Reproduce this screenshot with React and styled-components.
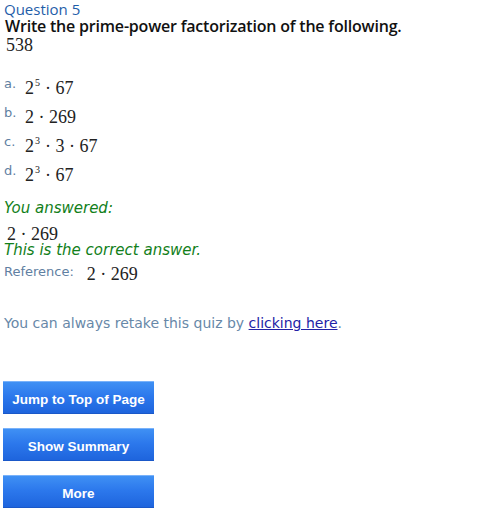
import React from "react";
import styled, { createGlobalStyle } from "styled-components";

const Global = createGlobalStyle`
  html, body { margin: 0; padding: 0; background: #fff; }
  body { font-family: "DejaVu Sans", sans-serif; }
`;

const Page = styled.div`
  width: 504px;
  height: 512px;
  overflow: hidden;
  padding: 0 4px;
  box-sizing: border-box;
  display: flex;
  flex-direction: column;
`;

const QTitle = styled.div`
  font-family: "Open Sans", sans-serif;
  font-size: 15px;
  line-height: 18px;
  height: 18px;
  color: #1f5ea9;
`;

const Prompt = styled.div`
  font-family: "Open Sans", sans-serif;
  font-weight: 600;
  font-size: 16px;
  line-height: 16px;
  color: #111;
  letter-spacing: -0.2px;
  padding-left: 1px;
`;

const Formula = styled.span`
  font-family: "Liberation Serif", "DejaVu Serif", serif;
  font-size: 18px;
  color: #222;
  white-space: nowrap;
`;

const Sup = styled.span`
  font-size: 10px;
  position: relative;
  top: -8px;
  margin: 0 5px 0 1px;
`;

const Given = styled.div`
  padding-left: 2px;
  margin-top: 1px;
  line-height: 20px;
  height: 20px;
`;

const Options = styled.div`
  display: flex;
  flex-direction: column;
  margin-top: 19px;
`;

const Option = styled.div`
  display: flex;
  align-items: baseline;
  line-height: 29px;
  height: 29px;
`;

const Letter = styled.span`
  width: 21px;
  font-family: "DejaVu Sans", sans-serif;
  font-size: 13px;
  color: #5f80a2;
  position: relative;
  top: -6px;
`;

const Feedback = styled.div`
  font-family: "DejaVu Sans", sans-serif;
  font-style: italic;
  font-size: 15px;
  line-height: ${(p) => p.$lh || 18}px;
  height: ${(p) => p.$lh || 18}px;
  color: #12801a;
  margin-top: ${(p) => p.$mt || 0}px;
`;

const Answer = styled.div`
  padding-left: 3px;
  margin-top: 8px;
  line-height: 18px;
  height: 18px;
`;

const RefRow = styled.div`
  display: flex;
  align-items: baseline;
  gap: 13px;
  margin-top: 5px;
  line-height: 24px;
  height: 24px;
`;

const RefLabel = styled.span`
  font-family: "DejaVu Sans", sans-serif;
  font-size: 13px;
  color: #5f80a2;
  position: relative;
  top: -4px;
`;

const Retake = styled.div`
  font-family: "DejaVu Sans", sans-serif;
  font-size: 14px;
  line-height: 18px;
  height: 18px;
  color: #6788a8;
  margin-top: 28px;
`;

const Link = styled.a`
  color: #2222a6;
  text-decoration: underline;
`;

const Buttons = styled.div`
  display: flex;
  flex-direction: column;
  gap: 14px;
  margin-top: 49px;
  margin-left: -1px;
`;

const Button = styled.button`
  width: 151px;
  height: 33px;
  border: none;
  border-top: 1px solid #79b2fa;
  background: linear-gradient(#3f90f4, #2c78ec 45%, #1d63dc);
  box-shadow: inset 0 -1px 0 #1a58c8;
  color: #fff;
  font-family: "Liberation Sans", Arial, sans-serif;
  font-weight: bold;
  font-size: 13.5px;
  padding: 2px 0 0;
  cursor: pointer;
`;

export default function App() {
  return (
    <Page>
      <Global />
      <QTitle>Question 5</QTitle>
      <Prompt>Write the prime-power factorization of the following.</Prompt>
      <Given><Formula>538</Formula></Given>
      <Options>
        <Option><Letter>a.</Letter><Formula>2<Sup>5</Sup>· 67</Formula></Option>
        <Option><Letter>b.</Letter><Formula>2 · 269</Formula></Option>
        <Option><Letter>c.</Letter><Formula>2<Sup>3</Sup>· 3 · 67</Formula></Option>
        <Option><Letter>d.</Letter><Formula>2<Sup>3</Sup>· 67</Formula></Option>
      </Options>
      <Feedback $mt={9}>You answered:</Feedback>
      <Answer><Formula>2 · 269</Formula></Answer>
      <Feedback $lh={14}>This is the correct answer.</Feedback>
      <RefRow><RefLabel>Reference:</RefLabel><Formula>2 · 269</Formula></RefRow>
      <Retake>You can always retake this quiz by <Link href="#">clicking here</Link>.</Retake>
      <Buttons>
        <Button>Jump to Top of Page</Button>
        <Button>Show Summary</Button>
        <Button>More</Button>
      </Buttons>
    </Page>
  );
}
